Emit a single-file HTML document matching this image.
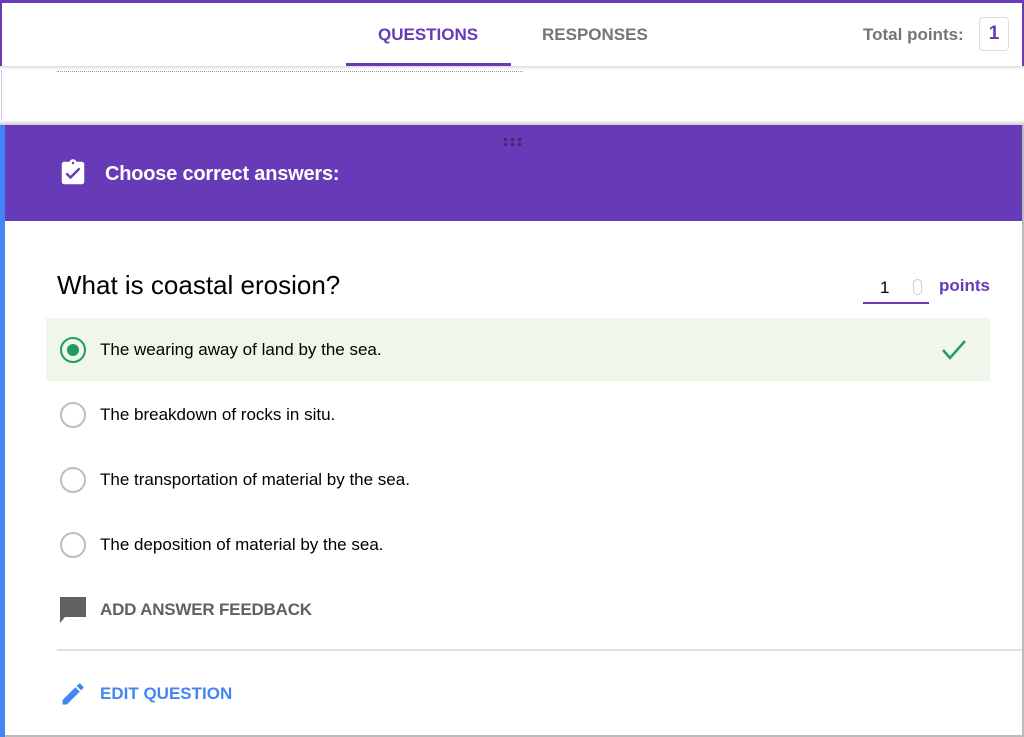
<!DOCTYPE html>
<html><head><style>
*{margin:0;padding:0;box-sizing:border-box}
body{width:1024px;height:737px;overflow:hidden;background:#fff;font-family:"Liberation Sans",Arial,sans-serif;position:relative}
.abs{position:absolute}
</style></head><body>
<div class="abs" style="left:0;top:0;width:1024px;height:3px;background:#673ab7"></div>
<div class="abs" style="left:0;top:0;width:2px;height:66px;background:#673ab7"></div>
<div class="abs" style="left:1022px;top:0;width:2px;height:66px;background:#673ab7"></div>
<div class="abs" style="left:0;top:66px;width:1024px;height:4px;background:linear-gradient(#ddd,#fff)"></div>
<div class="abs" style="left:378px;top:25px;font-size:17px;font-weight:bold;color:#673ab7">QUESTIONS</div>
<div class="abs" style="left:346px;top:63px;width:165px;height:3px;background:#673ab7"></div>
<div class="abs" style="left:542px;top:25px;font-size:17px;font-weight:bold;color:#757575">RESPONSES</div>
<div class="abs" style="left:863px;top:25px;font-size:17px;font-weight:bold;color:#757575">Total points:</div>
<div class="abs" style="left:979px;top:17px;width:30px;height:34px;border:1px solid #ddd;border-radius:4px;font-size:19px;font-weight:bold;color:#673ab7;text-align:center;line-height:32px">1</div>
<div class="abs" style="left:57px;top:71px;width:466px;height:0;border-top:1px dotted #999"></div>
<div class="abs" style="left:1px;top:70px;width:1px;height:55px;background:#c8c8e0"></div>
<div class="abs" style="left:0;top:120px;width:1024px;height:5px;background:linear-gradient(#fff,#ccc)"></div>
<div class="abs" style="left:0;top:125px;width:1024px;height:612px;border-right:2px solid #bbb;border-bottom:2px solid #bbb"></div>
<div class="abs" style="left:0;top:125px;width:1022px;height:96px;background:#673ab7"></div>
<div class="abs" style="left:0;top:125px;width:5px;height:612px;background:#4285f4"></div>
<div class="abs" style="left:502px;top:137px;width:22px;height:10px;background:radial-gradient(circle,#3c2a6b 1.5px,transparent 2px) 0 0/7px 5px"></div>
<svg class="abs" style="left:58px;top:158px" width="30" height="30" viewBox="0 0 24 24"><path fill="#fff" d="M19 3h-4.18C14.4 1.840 13.3 1 12 1s-2.4.84-2.82 2H5c-1.1 0-2 .9-2 2v14c0 1.1.9 2 2 2h14c1.1 0 2-.9 2-2V5c0-1.1-.9-2-2-2zm-7 0c.55 0 1 .45 1 1s-.45 1-1 1-1-.45-1-1 .45-1 1-1zm-2 14l-4-4 1.41-1.41L10 14.17l6.59-6.59L18 9l-8 8z"/></svg>
<div class="abs" style="left:105px;top:163px;font-size:20px;font-weight:bold;color:#fff;letter-spacing:-0.2px">Choose correct answers:</div>
<div class="abs" style="left:57px;top:270px;font-size:26px;color:#000">What is coastal erosion?</div>
<div class="abs" style="left:880px;top:278px;font-size:17px;color:#000">1</div>
<div class="abs" style="left:913px;top:279px;width:9px;height:16px;border:1px solid #ccc;border-radius:5px"></div>
<div class="abs" style="left:863px;top:302px;width:66px;height:2px;background:#673ab7"></div>
<div class="abs" style="left:939px;top:276px;font-size:17px;font-weight:bold;color:#673ab7">points</div>
<div class="abs" style="left:46px;top:318px;width:944px;height:63px;background:#f0f6e9"></div>
<div class="abs" style="left:60px;top:337px;width:26px;height:26px;border:2px solid #1e9e5a;border-radius:50%"></div>
<div class="abs" style="left:67px;top:344px;width:12px;height:12px;background:#1e9e5a;border-radius:50%"></div>
<svg class="abs" style="left:940px;top:337px" width="28" height="26" viewBox="0 0 28 26"><path d="M3 13l7 8L25 4" fill="none" stroke="#1e9e5a" stroke-width="2.5"/></svg>
<div class="abs" style="left:60px;top:402px;width:26px;height:26px;border:2px solid #bdbdbd;border-radius:50%"></div>
<div class="abs" style="left:60px;top:467px;width:26px;height:26px;border:2px solid #bdbdbd;border-radius:50%"></div>
<div class="abs" style="left:60px;top:532px;width:26px;height:26px;border:2px solid #bdbdbd;border-radius:50%"></div>
<div class="abs" style="left:100px;top:340px;font-size:17px;color:#000">The wearing away of land by the sea.</div>
<div class="abs" style="left:100px;top:405px;font-size:17px;color:#000">The breakdown of rocks in situ.</div>
<div class="abs" style="left:100px;top:470px;font-size:17px;color:#000">The transportation of material by the sea.</div>
<div class="abs" style="left:100px;top:535px;font-size:17px;color:#000">The deposition of material by the sea.</div>
<svg class="abs" style="left:59px;top:596px" width="28" height="28" viewBox="0 0 28 28"><path d="M1 1h26v20H6l-5 6z" fill="#616161"/></svg>
<div class="abs" style="left:100px;top:600px;font-size:17px;font-weight:bold;color:#616161;letter-spacing:-0.2px">ADD ANSWER FEEDBACK</div>
<div class="abs" style="left:57px;top:649px;width:965px;height:2px;background:#e0e0e0"></div>
<svg class="abs" style="left:59px;top:680px" width="28" height="28" viewBox="0 0 24 24"><path fill="#4285f4" d="M3 17.25V21h3.75L17.810 9.94l-3.75-3.75L3 17.25zM20.71 7.04a1 1 0 000-1.41l-2.34-2.34a1 1 0 00-1.41 0l-1.83 1.83 3.75 3.75 1.83-1.83z"/></svg>
<div class="abs" style="left:100px;top:684px;font-size:17px;font-weight:bold;color:#4285f4">EDIT QUESTION</div>
</body></html>
